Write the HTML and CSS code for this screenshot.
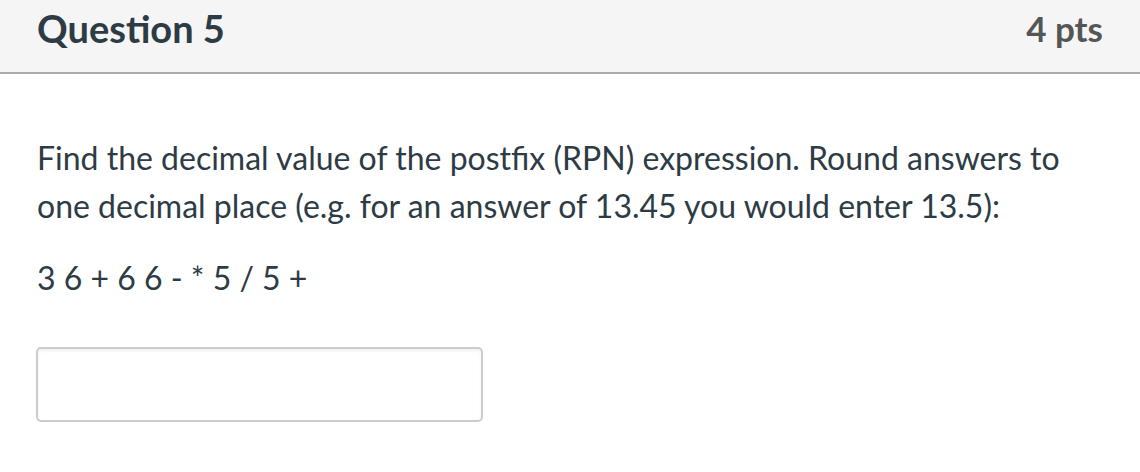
FILE: index.html
```html
<!DOCTYPE html>
<html>
<head>
<meta charset="utf-8">
<link rel="stylesheet" href="styles.css">
</head>
<body>
<div class="question">
  <div class="header">
    <span class="title">Question 5</span>
    <span class="points">4 pts</span>
  </div>
  <div class="content">
    <p class="text">Find the decimal value of the postfix (RPN) expression. Round answers to one decimal place (e.g. for an answer of 13.45 you would enter 13.5):</p>
    <p class="expr">3 6 + 6 6 - * 5 / 5 +</p>
    <input class="answer" type="text">
  </div>
</div>
</body>
</html>
```
FILE: styles.css
```css
html, body {
  margin: 0;
  padding: 0;
  background: #fff;
}
body {
  font-family: Lato, "Noto Sans", sans-serif;
  color: #2d3b45;
}
.header {
  display: flex;
  justify-content: space-between;
  align-items: center;
  padding: 0 37px;
  background: #f5f5f5;
  border-bottom: 2px solid #aaaaaa;
  box-sizing: border-box;
  height: 74px;
}
.title {
  font-size: 38px;
  font-weight: 700;
  color: #2d3b45;
  margin-top: -16px;
}
.points {
  font-size: 35px;
  font-weight: 700;
  color: #555555;
  margin-top: -16px;
}
.content {
  padding: 0 37px;
}
.text {
  margin: 60px 0 0;
  font-size: 32px;
  line-height: 48px;
  max-width: 1040px;
}
.expr {
  margin: 24px 0 0;
  font-size: 32px;
  line-height: 48px;
}
.answer {
  display: block;
  margin-top: 45px;
  width: 447px;
  height: 75px;
  box-sizing: border-box;
  border: 2px solid #cccccc;
  border-radius: 5px;
  box-shadow: inset 0 2px 3px rgba(0,0,0,0.06);
  background: #fff;
  font-family: inherit;
  font-size: 28px;
  margin-left: -1px;
}
```
